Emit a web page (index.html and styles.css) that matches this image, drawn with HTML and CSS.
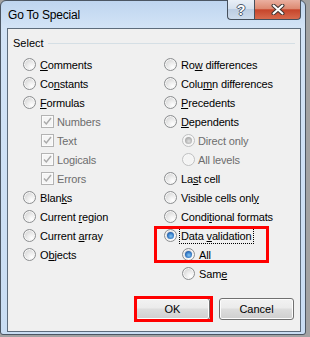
FILE: index.html
```html
<!DOCTYPE html>
<html lang="en">
<head>
    <meta charset="UTF-8">
    <title>Go To Special</title>
    <link rel="stylesheet" href="styles.css">
</head>
<body>
    <div class="window">
        <div class="titlebar">
            <span class="title">Go To Special</span>
            <div class="caption">
                <span class="cap help">?</span>
                <span class="cap close">
                    <svg width="14" height="11" viewBox="0 0 14 11">
                        <path d="M2.5 1.5 L11.5 9.5 M11.5 1.5 L2.5 9.5" stroke="#3f3431" stroke-width="4" stroke-linecap="round"/>
                        <path d="M2.5 1.5 L11.5 9.5 M11.5 1.5 L2.5 9.5" stroke="#fff" stroke-width="2" stroke-linecap="round"/>
                    </svg>
                </span>
            </div>
        </div>

        <div class="client">
            <div class="group-head">
                <span>Select</span>
                <span class="rule"></span>
            </div>

            <div class="options">
                <div class="col">
                    <div class="row"><span class="radio"></span><span><u>C</u>omments</span></div>
                    <div class="row"><span class="radio"></span><span>Co<u>n</u>stants</span></div>
                    <div class="row"><span class="radio"></span><span><u>F</u>ormulas</span></div>
                    <div class="row sub dim"><span class="check"><svg width="11" height="11" viewBox="0 0 11 11"><path d="M2 5.5 L4.3 8 L9 2" fill="none" stroke="#a9a9a9" stroke-width="1.4"/></svg></span><span>Numbers</span></div>
                    <div class="row sub dim"><span class="check"><svg width="11" height="11" viewBox="0 0 11 11"><path d="M2 5.5 L4.3 8 L9 2" fill="none" stroke="#a9a9a9" stroke-width="1.4"/></svg></span><span>Text</span></div>
                    <div class="row sub dim"><span class="check"><svg width="11" height="11" viewBox="0 0 11 11"><path d="M2 5.5 L4.3 8 L9 2" fill="none" stroke="#a9a9a9" stroke-width="1.4"/></svg></span><span>Logicals</span></div>
                    <div class="row sub dim"><span class="check"><svg width="11" height="11" viewBox="0 0 11 11"><path d="M2 5.5 L4.3 8 L9 2" fill="none" stroke="#a9a9a9" stroke-width="1.4"/></svg></span><span>Errors</span></div>
                    <div class="row"><span class="radio"></span><span>Blan<u>k</u>s</span></div>
                    <div class="row"><span class="radio"></span><span>Current <u>r</u>egion</span></div>
                    <div class="row"><span class="radio"></span><span>Current <u>a</u>rray</span></div>
                    <div class="row"><span class="radio"></span><span>O<u>b</u>jects</span></div>
                </div>
                <div class="col">
                    <div class="row"><span class="radio"></span><span>Ro<u>w</u> differences</span></div>
                    <div class="row"><span class="radio"></span><span>Colu<u>m</u>n differences</span></div>
                    <div class="row"><span class="radio"></span><span><u>P</u>recedents</span></div>
                    <div class="row"><span class="radio"></span><span><u>D</u>ependents</span></div>
                    <div class="row sub dim"><span class="radio off on"></span><span>Direct only</span></div>
                    <div class="row sub dim"><span class="radio off"></span><span>All levels</span></div>
                    <div class="row"><span class="radio"></span><span>La<u>s</u>t cell</span></div>
                    <div class="row"><span class="radio"></span><span>Visible cells onl<u>y</u></span></div>
                    <div class="row"><span class="radio"></span><span>Condi<u>t</u>ional formats</span></div>
                    <div class="marked-area">
                        <div class="row"><span class="radio on"></span><span class="focus">Data <u>v</u>alidation</span></div>
                        <div class="row sub"><span class="radio on"></span><span>Al<u>l</u></span></div>
                    </div>
                    <div class="row sub"><span class="radio"></span><span>Sam<u>e</u></span></div>
                </div>
            </div>

            <div class="buttons">
                <button class="btn marked">OK</button>
                <button class="btn">Cancel</button>
            </div>
        </div>
    </div>
</body>
</html>
```

FILE: styles.css
```css
body {
    margin: 0;
    width: 310px;
    height: 337px;
    overflow: hidden;
    background: #a2a2a2;
    font-family: "Liberation Sans", Arial, sans-serif;
    font-size: 11px;
    color: #000;
}

.window {
    width: 306px;
    height: 335px;
    box-sizing: border-box;
    border: 1px solid #4b5663;
    border-radius: 6px 6px 3px 3px;
    background: linear-gradient(#bed5ef, #d2e3f6 26px, #c9ddf3);
    padding: 0 4px 2px 6px;
    display: flex;
    flex-direction: column;
}

.titlebar {
    height: 27px;
    flex-shrink: 0;
    display: flex;
    justify-content: space-between;
    align-items: flex-start;
}

.title {
    font-size: 12px;
    line-height: 14px;
    margin: 7px 0 0 1px;
    letter-spacing: -0.2px;
}

.caption {
    display: flex;
    margin-top: -1px;
}

.cap {
    height: 20px;
    box-sizing: border-box;
    border: 1px solid #46505c;
    border-top: none;
    display: flex;
    align-items: center;
    justify-content: center;
}

.help {
    width: 27px;
    border-right: none;
    border-radius: 0 0 0 4px;
    background: linear-gradient(#e9eff7, #d6e1ee 45%, #bccde2 50%, #cddbec);
    color: #fff;
    font-size: 14px;
    font-weight: bold;
    text-shadow: 1px 0 #4d5b6e, -1px 0 #4d5b6e, 0 1px #4d5b6e, 0 -1px #4d5b6e;
}

.close {
    width: 47px;
    border-radius: 0 0 4px 0;
    background: linear-gradient(#eab0a0, #dd8a72 45%, #c6452b 52%, #d76a4d);
}

.client {
    flex: 1;
    border: 1px solid #5d6c7c;
    background: #f0f0f0;
    display: flex;
    flex-direction: column;
}

.group-head {
    height: 14px;
    margin: 7px 5px 0 5px;
    display: flex;
    align-items: center;
    gap: 4px;
}

.rule {
    flex: 1;
    height: 1px;
    background: #d5dfe5;
}

.options {
    display: grid;
    grid-template-columns: 141px 1fr;
    padding-left: 15px;
    margin-top: 5px;
}

.col {
    display: flex;
    flex-direction: column;
}

.row {
    height: 19px;
    display: flex;
    align-items: center;
    gap: 4px;
    white-space: nowrap;
    letter-spacing: -0.15px;
}

.row.sub {
    padding-left: 18px;
}

.row.dim {
    color: #6d6d6d;
    gap: 3px;
}

.radio {
    width: 13px;
    height: 13px;
    box-sizing: border-box;
    flex-shrink: 0;
    border-radius: 50%;
    border: 1px solid #8c8e90;
    background: radial-gradient(circle at 70% 75%, #ffffff 0, #eeeeee 35%, #cfcfcf 90%);
    box-shadow: inset 0 0 0 1px #f7f7f7;
    position: relative;
}

.radio.on::after {
    content: "";
    position: absolute;
    inset: 2px;
    border-radius: 50%;
    background: radial-gradient(circle at 55% 60%, #86c6f1 0, #2f74c2 55%, #1b3f7a 100%);
}

.radio.off {
    border-color: #bfc0c1;
    background: #f4f4f4;
}

.radio.off.on::after {
    background: radial-gradient(circle at 55% 60%, #e2e2e2 0, #b3b3b3 55%, #9a9a9a 100%);
}

.check {
    width: 13px;
    height: 13px;
    box-sizing: border-box;
    flex-shrink: 0;
    border: 1px solid #b3b3b3;
    background: #f5f5f5;
    box-shadow: inset 0 0 0 1px #fbfbfb;
}

.check svg {
    display: block;
}

.focus {
    outline: 1px dotted #000;
    outline-offset: 1px;
}

.marked-area {
    position: relative;
}

.marked-area::after {
    content: "";
    position: absolute;
    left: -10px;
    top: 0;
    width: 115px;
    height: 37px;
    box-sizing: border-box;
    border: 3px solid #ff0000;
}

.buttons {
    margin-top: auto;
    margin-bottom: 11px;
    padding-right: 6px;
    display: flex;
    justify-content: flex-end;
    gap: 9px;
}

.btn {
    width: 75px;
    height: 22px;
    padding: 0;
    font-family: inherit;
    font-size: 11px;
    color: #000;
    border: 1px solid #707070;
    border-radius: 3px;
    background: linear-gradient(#f2f2f2, #ebebeb 45%, #dddddd 50%, #cfcfcf);
    box-shadow: inset 0 0 0 1px #fcfcfc;
}

.btn.marked {
    position: relative;
}

.btn.marked::after {
    content: "";
    position: absolute;
    left: -2px;
    right: -4px;
    top: -3px;
    bottom: -3px;
    border: 3px solid #ff0000;
}
```
